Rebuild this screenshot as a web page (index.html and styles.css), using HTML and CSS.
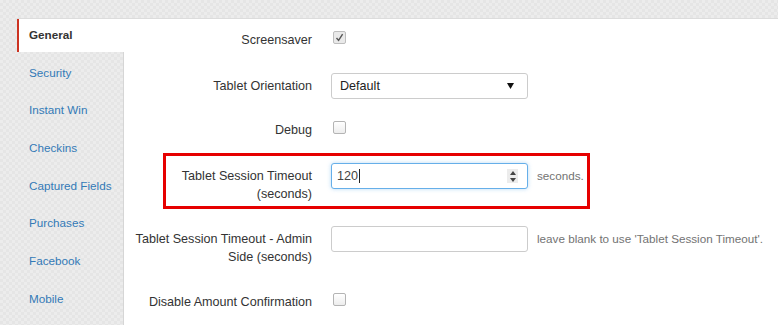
FILE: index.html
```html
<!DOCTYPE html>
<html lang="en">
<head>
  <meta charset="UTF-8">
  <meta name="viewport" content="width=device-width, initial-scale=1.0">
  <title>Settings</title>
  <link rel="stylesheet" href="styles.css">
</head>
<body>
  <div class="page">
    <div class="panel">
      <ul class="tabs">
        <li class="active">General</li>
        <li>Security</li>
        <li>Instant Win</li>
        <li>Checkins</li>
        <li>Captured Fields</li>
        <li>Purchases</li>
        <li>Facebook</li>
        <li>Mobile</li>
      </ul>

      <form class="settings">
        <div class="row">
          <label>Screensaver</label>
          <div class="control">
            <span class="checkbox checked">
              <svg width="9" height="9" viewBox="0 0 9 9"><path d="M1.5 5 L3.6 7.4 L7.6 1.2" fill="none" stroke="#555" stroke-width="1.4"/></svg>
            </span>
          </div>
        </div>

        <div class="row tight">
          <label>Tablet Orientation</label>
          <div class="control">
            <div class="select">
              <span>Default</span>
              <svg width="7" height="6" viewBox="0 0 7 6"><path d="M0 0 H7 L3.5 6 Z" fill="#111"/></svg>
            </div>
          </div>
        </div>

        <div class="row">
          <label>Debug</label>
          <div class="control">
            <span class="checkbox"></span>
          </div>
        </div>

        <div class="row highlight loose">
          <label>Tablet Session Timeout (seconds)</label>
          <div class="control">
            <div class="input focus">
              <span>120</span><i class="caret"></i>
              <span class="spin">
                <svg width="6" height="13" viewBox="0 0 6 13"><path d="M0 5 L3 1 L6 5 Z M0 8 L3 12 L6 8 Z" fill="#444"/></svg>
              </span>
            </div>
          </div>
          <span class="help">seconds.</span>
          <span class="annotation"></span>
        </div>

        <div class="row loose">
          <label>Tablet Session Timeout - Admin Side (seconds)</label>
          <div class="control">
            <div class="input"></div>
          </div>
          <span class="help">leave blank to use 'Tablet Session Timeout'.</span>
        </div>

        <div class="row">
          <label>Disable Amount Confirmation</label>
          <div class="control">
            <span class="checkbox"></span>
          </div>
        </div>
      </form>
    </div>
  </div>
</body>
</html>
```

FILE: styles.css
```css
*{
  box-sizing: border-box;
}

html,body{
  margin: 0;
  height: 100%;
}

body{
  font-family: "Liberation Sans", Arial, sans-serif;
  color: #333;
  background: repeating-conic-gradient(#e5e5e5 0 25%, #ececec 0 50%) 0 0/6px 6px;
  overflow: hidden;
}

.page{
  padding: 18px 0 0 17px;
  height: 100%;
}

.panel{
  display: flex;
  height: 100%;
  border-top: 1px solid #dcdcdc;
}

/* left tabs */
.tabs{
  width: 106px;
  margin: 0;
  padding: 0;
  list-style: none;
  flex-shrink: 0;
  position: relative;
  z-index: 1;
}

.tabs li{
  height: 33px;
  line-height: 31px;
  margin-bottom: 4.7px;
  padding-left: 12px;
  font-size: 11.7px;
  color: #337ab7;
  white-space: nowrap;
}

.tabs li.active{
  background: #fff;
  color: #333;
  font-weight: bold;
  border-left: 2px solid #cc3322;
  padding-left: 10px;
  margin-right: -1px;
}

/* form */
.settings{
  flex: 1;
  background: #fff;
  border-left: 1px solid #d6d6d6;
  padding: 8px 0 0 8px;
}

.row{
  display: flex;
  align-items: flex-start;
  margin-bottom: 20px;
  font-size: 12.6px;
  position: relative;
}

.row.tight{
  margin-bottom: 18px;
}

.row.loose{
  margin-bottom: 23px;
}

.row label{
  width: 180px;
  text-align: right;
  padding-top: 4px;
  line-height: 18px;
  margin-right: 19px;
}

.control{
  width: 197px;
  min-height: 26px;
}

.help{
  margin-left: 9px;
  padding-top: 4px;
  line-height: 18px;
  font-size: 11.7px;
  color: #737373;
  white-space: nowrap;
}

.checkbox{
  display: flex;
  align-items: center;
  justify-content: center;
  width: 13px;
  height: 13px;
  margin: 4px 0 0 2px;
  border: 1px solid #b4b4b4;
  border-radius: 2px;
  background: linear-gradient(#fff, #ededed);
}

.checkbox.checked{
  background: #e9e9e9;
  border-color: #bdbdbd;
}

.select,
.input{
  display: flex;
  align-items: center;
  height: 26px;
  border: 1px solid #ccc;
  border-radius: 3px;
  background: #fff;
}

.select{
  justify-content: space-between;
  padding: 0 13px 0 8px;
  color: #222;
}

.input{
  padding: 0 9px 0 5px;
  color: #444;
}

.input.focus{
  border-color: #66afe9;
  box-shadow: 0 0 4px rgba(102,175,233,.45);
}

.caret{
  width: 1px;
  height: 14px;
  background: #222;
  margin-left: 1px;
}

.spin{
  margin-left: auto;
  width: 11px;
  height: 14px;
  background: #ececec;
  display: flex;
  align-items: center;
  justify-content: center;
}

/* red annotation box drawn over the row */
.annotation{
  position: absolute;
  left: 31px;
  top: -10px;
  width: 427px;
  height: 56px;
  border: 3px solid #e60000;
  pointer-events: none;
}
```
